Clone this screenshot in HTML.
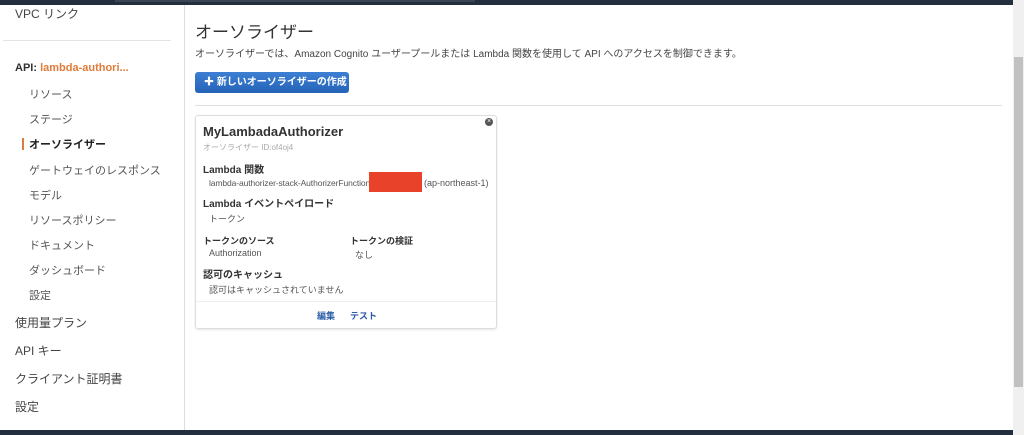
<!DOCTYPE html>
<html><head><meta charset="utf-8"><style>
*{margin:0;padding:0;box-sizing:border-box}
body{width:1024px;height:435px;overflow:hidden;background:#fff;font-family:"Liberation Sans","Noto Sans CJK JP",sans-serif;color:#444;position:relative}
.a{position:absolute;white-space:nowrap}
.top{left:0;top:0;width:1013px;height:5px;background:#232f3e}
.bot{left:0;top:430px;width:1013px;height:5px;background:#232f3e}
.sb{left:1013px;top:0;width:11px;height:435px;background:#f0f0f0}
.th{left:1014px;top:57px;width:9px;height:330px;background:#c1c1c1}
.side{left:0;top:5px;width:185px;height:425px;border-right:1px solid #ddd}
.m{font-size:12px;color:#444}
.sub{font-size:11px;color:#555;left:29px}
.card{left:195px;top:115px;width:302px;height:214px;border:1px solid #ddd;border-radius:3px;box-shadow:0 1px 2px rgba(0,0,0,.1)}
.b{font-weight:bold;font-size:10px;color:#333}
.t{font-size:9px;color:#555}
</style></head><body>
<div class="a top"></div><div class="a" style="left:115px;top:0;width:360px;height:2px;background:#3a4553"></div>
<div class="a side"></div>
<div class="a m" style="left:15px;top:5px">VPC リンク</div>
<div class="a" style="left:3px;top:40px;width:168px;height:1px;background:#e3e3e3"></div>
<div class="a" style="left:15px;top:62px;font-size:11px;font-weight:bold;color:#333">API: <span style="color:#e07b39">lambda-authori...</span></div>
<div class="a sub" style="top:86px">リソース</div>
<div class="a sub" style="top:111px">ステージ</div>
<div class="a" style="left:22px;top:138px;width:2px;height:12px;background:#e07b39"></div>
<div class="a sub" style="top:136px;font-weight:bold;color:#222">オーソライザー</div>
<div class="a sub" style="top:162px">ゲートウェイのレスポンス</div>
<div class="a sub" style="top:187px">モデル</div>
<div class="a sub" style="top:212px">リソースポリシー</div>
<div class="a sub" style="top:237px">ドキュメント</div>
<div class="a sub" style="top:262px">ダッシュボード</div>
<div class="a sub" style="top:287px">設定</div>
<div class="a m" style="left:15px;top:314px">使用量プラン</div>
<div class="a m" style="left:15px;top:342px">API キー</div>
<div class="a m" style="left:15px;top:370px">クライアント証明書</div>
<div class="a m" style="left:15px;top:398px">設定</div>

<div class="a" style="left:195px;top:18px;font-size:17px;color:#333">オーソライザー</div>
<div class="a" style="left:195px;top:45px;font-size:10px;color:#444">オーソライザーでは、Amazon Cognito ユーザープールまたは Lambda 関数を使用して API へのアクセスを制御できます。</div>
<div class="a" style="left:195px;top:72px;width:154px;height:21px;background:linear-gradient(#3d7fd3,#2463b8);border-radius:3px;color:#fff;font-size:10px;font-weight:bold;line-height:21px;padding-left:9px">✚&nbsp;新しいオーソライザーの作成</div>
<div class="a" style="left:195px;top:105px;width:807px;height:1px;background:#e0e0e0"></div>

<div class="a card"></div>
<div class="a" style="left:485px;top:118px;width:8px;height:8px;border-radius:50%;background:#555;color:#fff;font-size:7px;line-height:8px;text-align:center">×</div>
<div class="a" style="left:203px;top:124px;font-size:13px;font-weight:bold;color:#333">MyLambadaAuthorizer</div>
<div class="a" style="left:203px;top:142px;font-size:8px;color:#aaa">オーソライザー ID:of4oj4</div>
<div class="a b" style="left:203px;top:161px">Lambda 関数</div>
<div class="a t" style="left:209px;top:178px;font-size:8.5px;letter-spacing:-0.1px">lambda-authorizer-stack-AuthorizerFunction-</div>
<div class="a" style="left:369px;top:172px;width:53px;height:20px;background:#e8432a"></div>
<div class="a t" style="left:424px;top:178px">(ap-northeast-1)</div>
<div class="a b" style="left:203px;top:195px">Lambda イベントペイロード</div>
<div class="a t" style="left:209px;top:212px">トークン</div>
<div class="a b" style="left:203px;top:234px;font-size:9px">トークンのソース</div>
<div class="a b" style="left:350px;top:234px;font-size:9px">トークンの検証</div>
<div class="a t" style="left:209px;top:248px">Authorization</div>
<div class="a t" style="left:355px;top:248px">なし</div>
<div class="a b" style="left:203px;top:266px">認可のキャッシュ</div>
<div class="a t" style="left:209px;top:283px">認可はキャッシュされていません</div>
<div class="a" style="left:196px;top:301px;width:300px;height:1px;background:#eee"></div>
<div class="a" style="left:317px;top:309px;font-size:9px;font-weight:bold;color:#2c5ea8">編集</div>
<div class="a" style="left:350px;top:309px;font-size:9px;font-weight:bold;color:#2c5ea8">テスト</div>

<div class="a sb"></div><div class="a th"></div>
<div class="a bot"></div>
</body></html>
